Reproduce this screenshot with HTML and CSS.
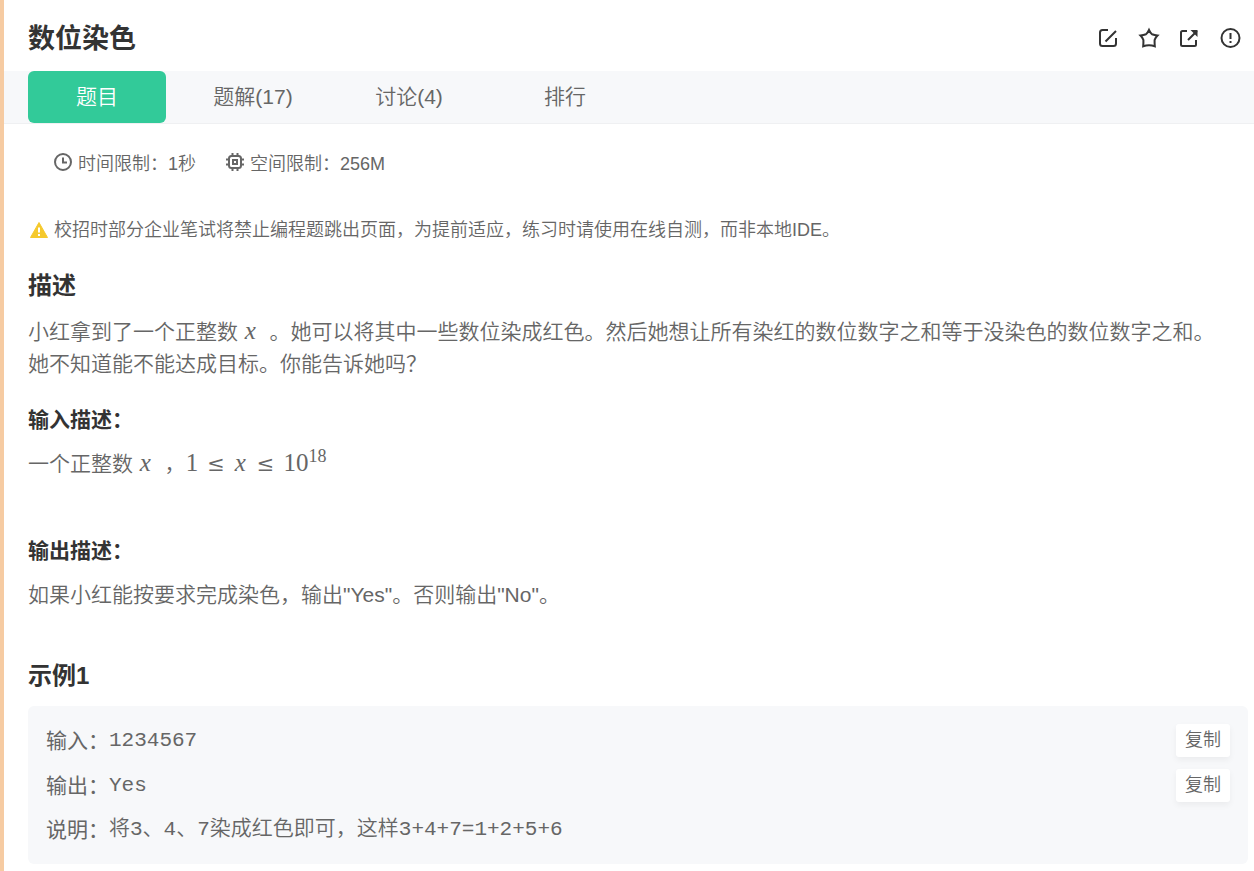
FILE: index.html
```html
<!DOCTYPE html>
<html lang="zh-CN">
<head>
<meta charset="UTF-8" />
<meta name="viewport" content="width=device-width, initial-scale=1" />
<title>数位染色</title>
<link rel="stylesheet" href="styles.css">
</head>
<body>
<div class="page">
  <header class="header">
    <h1>数位染色</h1>
    <div class="actions">
      <button class="icon-btn" aria-label="笔记">
        <svg viewBox="0 0 24 24"><path d="M13 4H7.500Q5 4 5 6.500V17.500Q5 20 7.500 20H18.500Q21 20 21 17.500V12M10.500 15.500L21 5"/></svg>
      </button>
      <button class="icon-btn" aria-label="收藏">
        <svg viewBox="0 0 24 24"><path d="M13 4Q14.200 6.800 16 8.200Q18.500 9.200 21.500 9.500Q19.200 11.800 18.600 14Q18.500 17 18.800 20.200Q16 19.200 13 19.200Q10 19.200 7.200 20.200Q7.500 17 7.400 14Q6.800 11.800 4.500 9.500Q7.500 9.200 10 8.200Q11.800 6.800 13 4Z"/></svg>
      </button>
      <button class="icon-btn" aria-label="分享">
        <svg viewBox="0 0 24 24"><path d="M10 5H5.500Q4 5 4 6.500V18.500Q4 20 5.500 20H17.500Q19 20 19 18.500V14M20 5L11 14"/><path class="solid" d="M13.500 4H20.500V11Z"/></svg>
      </button>
      <button class="icon-btn" aria-label="反馈">
        <svg viewBox="0 0 24 24"><circle cx="12.500" cy="12" r="9"/><path d="M12.500 7V13M12.500 15V17"/></svg>
      </button>
    </div>
  </header>

  <nav class="tabs">
    <a class="tab active" href="#problem">题目</a>
    <a class="tab" href="#solution">题解(17)</a>
    <a class="tab" href="#discuss">讨论(4)</a>
    <a class="tab" href="#rank">排行</a>
  </nav>

  <main class="content" id="problem">
    <div class="limits">
      <span class="limit">
        <svg viewBox="0 0 18 18"><circle cx="9" cy="9" r="8"/><path d="M9 4.500V9.500H13"/></svg>
        时间限制：1秒
      </span>
      <span class="limit">
        <svg viewBox="0 0 18 18"><rect x="3" y="3" width="12" height="12" rx="2.500"/><rect x="7" y="7" width="4" height="4"/><path d="M6.500 0V3M11.500 0V3M6.500 15V18M11.500 15V18M0 6.500H3M0 11.500H3M15 6.500H18M15 11.500H18"/></svg>
        空间限制：256M
      </span>
    </div>

    <p class="notice">
      <svg viewBox="0 0 18 18"><path class="warn" d="M9 1.500L17.500 16.500H0.500Z"/><path class="mark" d="M9 6.500V11.500M9 13V15"/></svg>
      校招时部分企业笔试将禁止编程题跳出页面，为提前适应，练习时请使用在线自测，而非本地IDE。
    </p>

    <h2>描述</h2>
    <p class="text">小红拿到了一个正整数 <i class="math var">x</i>&nbsp; 。她可以将其中一些数位染成红色。然后她想让所有染红的数位数字之和等于没染色的数位数字之和。<br>她不知道能不能达成目标。你能告诉她吗？</p>

    <h3>输入描述：</h3>
    <p class="text input-desc">一个正整数 <i class="math var">x</i>&nbsp; ，<span class="math">1<span class="rel">≤</span><i class="var">x</i><span class="rel">≤</span>10<sup>18</sup></span></p>

    <h3>输出描述：</h3>
    <p class="text output-desc">如果小红能按要求完成染色，输出"Yes"。否则输出"No"。</p>

    <h2>示例1</h2>
    <div class="example">
      <div class="row">
        <span class="label">输入：</span>
        <pre>1234567</pre>
        <button class="copy">复制</button>
      </div>
      <div class="row">
        <span class="label">输出：</span>
        <pre>Yes</pre>
        <button class="copy">复制</button>
      </div>
      <div class="row">
        <span class="label">说明：</span>
        <pre>将3、4、7染成红色即可，这样3+4+7=1+2+5+6</pre>
      </div>
    </div>
  </main>
</div>
</body>
</html>
```

FILE: styles.css
```css
* {
  box-sizing: border-box;
}
body {
  margin: 0; background: #fff; color: #666;
  font-family: "Liberation Sans", "Noto Sans CJK SC", sans-serif;
  font-size: 21px; line-height: 32px; font-weight: 350;
}
h1, h2, h3, p, pre {
  margin: 0;
}
h1, h2, h3 {
  color: #333; font-weight: bold;
}
h1 {
  font-size: 27px; line-height: 36px;
}
h2 {
  font-size: 24px; line-height: 36px;
}
h3 {
  font-size: 21px; line-height: 32px;
}
button {
  border: none; font-family: inherit; font-weight: inherit; cursor: pointer;
}
svg {
  fill: none; stroke: currentColor; flex: none;
}
.page {
  min-height: 100vh; border-left: 4px solid #f6cba2;
}
.header {
  display: flex; justify-content: space-between; align-items: flex-end;
  padding: 21px 12px 14px 24px;
}
.actions {
  display: flex; gap: 17px; padding-bottom: 7px;
}
.icon-btn {
  display: flex; padding: 0; background: none; color: #333;
}
.icon-btn svg {
  width: 24px; height: 24px; stroke-width: 2;
}
.solid {
  fill: currentColor; stroke: none;
}
.tabs {
  display: flex; gap: 18px; padding-left: 24px;
  background: #f7f8fa; border-bottom: 1px solid #eff0f2;
}
.tab {
  width: 138px; line-height: 52px; text-align: center;
  color: #666; text-decoration: none; border-radius: 6px;
}
.tab.active {
  background: #32ca99; color: #fff;
}
.content {
  padding: 24px 6px 7px 24px;
}
.limits {
  display: flex; gap: 30px; padding-left: 26px; font-size: 18px;
}
.limit {
  display: flex; align-items: center; gap: 6px;
}
.limit svg {
  width: 18px; height: 18px; margin-bottom: 4px; stroke-width: 2;
}
.notice {
  display: flex; align-items: center; gap: 6px;
  margin: 34px 0 22px 2px; font-size: 18px;
}
.notice svg {
  width: 18px; height: 18px;
}
.warn {
  fill: #f5c92d; stroke: #f5c92d; stroke-linejoin: round;
}
.mark {
  stroke: #fff; stroke-width: 2;
}
.text {
  margin: 12px 0 24px;
}
.input-desc {
  margin-bottom: 55px;
}
.output-desc {
  margin-bottom: 47px;
}
.math {
  font-family: "Liberation Serif", serif; font-size: 25px; line-height: 1;
}
.var {
  margin: 0 2px 0 1px;
}
.rel {
  margin: 0 9px; font-family: "DejaVu Serif", serif; font-size: 21px; line-height: 1;
}
sup {
  font-size: 18px; line-height: 0;
}
.example {
  display: flex; flex-direction: column; gap: 12px;
  margin-top: 12px; padding: 18px; border-radius: 6px; background: #f7f8fa;
}
.row {
  display: flex; align-items: center;
}
.row pre {
  flex: 1; font-family: "Liberation Mono", "Noto Sans CJK SC", monospace; white-space: pre-wrap;
}
.label {
  font-weight: normal;
}
.copy {
  padding: 0 9px; border-radius: 3px; background: #fff; color: #666;
  font-size: 18px; line-height: 33px; box-shadow: 0 3px 6px rgba(0,0,0,0.05);
}
```
